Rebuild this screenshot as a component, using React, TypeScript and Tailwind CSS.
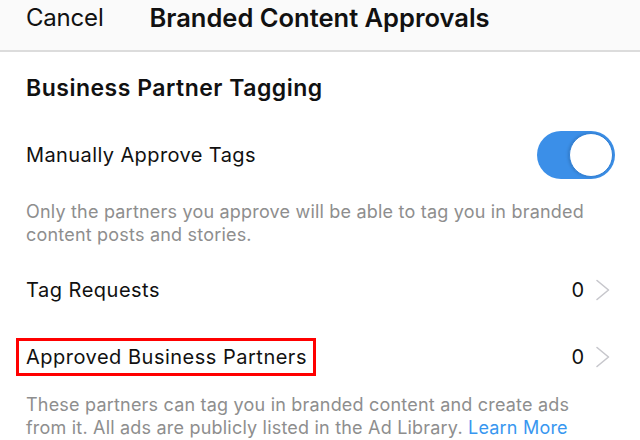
import React from "react";

function Chevron() {
  return (
    <svg width="16" height="22" viewBox="0 0 16 22" fill="none" className="ml-[11px]">
      <path d="M2 1.5 L13.5 11 L2 20.5" stroke="#c7c7cc" strokeWidth="1.6" strokeLinecap="round" strokeLinejoin="round" />
    </svg>
  );
}

function Toggle({ on }: { on: boolean }) {
  return (
    <div
      className={
        "w-[78px] h-[48px] rounded-full flex items-center p-[2px] " +
        (on ? "bg-[#3b8fe8] justify-end" : "bg-[#e5e5ea] justify-start")
      }
    >
      <div className="w-[44px] h-[44px] rounded-full bg-white border border-[#2f7fd6] shadow-[-1px_0_3px_rgba(0,0,0,0.15)]" />
    </div>
  );
}

function CountRow({ label, count, boxed }: { label: string; count: number; boxed?: boolean }) {
  return (
    <div className="h-[54px] flex items-center justify-between">
      <span
        className={
          "text-[20px] leading-[26px] tracking-[0.5px] " +
          (boxed ? "ml-[-10px] pl-[7px] pr-[6px] py-[3px] border-[3px] border-[#ff0000]" : "")
        }
      >
        {label}
      </span>
      <div className="flex items-center mr-[3px]">
        <span className="text-[20px]">{count}</span>
        <Chevron />
      </div>
    </div>
  );
}

export default function App() {
  return (
    <div className="w-[640px] h-[440px] overflow-hidden bg-white text-[#111] font-['Inter','Roboto',sans-serif]">
      {/* top bar */}
      <div className="h-[52px] bg-[#fafafa] border-b-2 border-[#dcdcdc] flex items-start pt-[3px] px-[26px] gap-[46px]">
        <span className="text-[24px] leading-[30px] tracking-[-0.2px]">Cancel</span>
        <span className="text-[25.5px] leading-[30px] font-semibold">Branded Content Approvals</span>
      </div>

      <div className="px-[26px]">
        <div className="h-[70px] flex items-center pt-[2px]">
          <h2 className="text-[23px] font-semibold tracking-[0.5px]">Business Partner Tagging</h2>
        </div>

        <div className="h-[66px] flex items-center justify-between">
          <span className="text-[20px] tracking-[0.4px]">Manually Approve Tags</span>
          <div className="mr-[-1px]">
            <Toggle on />
          </div>
        </div>

        <p className="mt-[12px] w-[588px] text-[18px] leading-[23px] text-[#8e8e8e] tracking-[0.2px]">
          Only the partners you approve will be able to tag you in branded content posts and stories.
        </p>

        <div className="mt-[17px]">
          <CountRow label="Tag Requests" count={0} />
        </div>

        <div className="mt-[13px]">
          <CountRow label="Approved Business Partners" count={0} boxed />
        </div>

        <p className="mt-[9px] w-[580px] text-[18px] leading-[23px] text-[#8e8e8e] tracking-[0.2px]">
          These partners can tag you in branded content and create ads from it. All ads are publicly listed in the Ad Library.{" "}
          <span className="text-[#3897f0]">Learn More</span>
        </p>
      </div>
    </div>
  );
}
